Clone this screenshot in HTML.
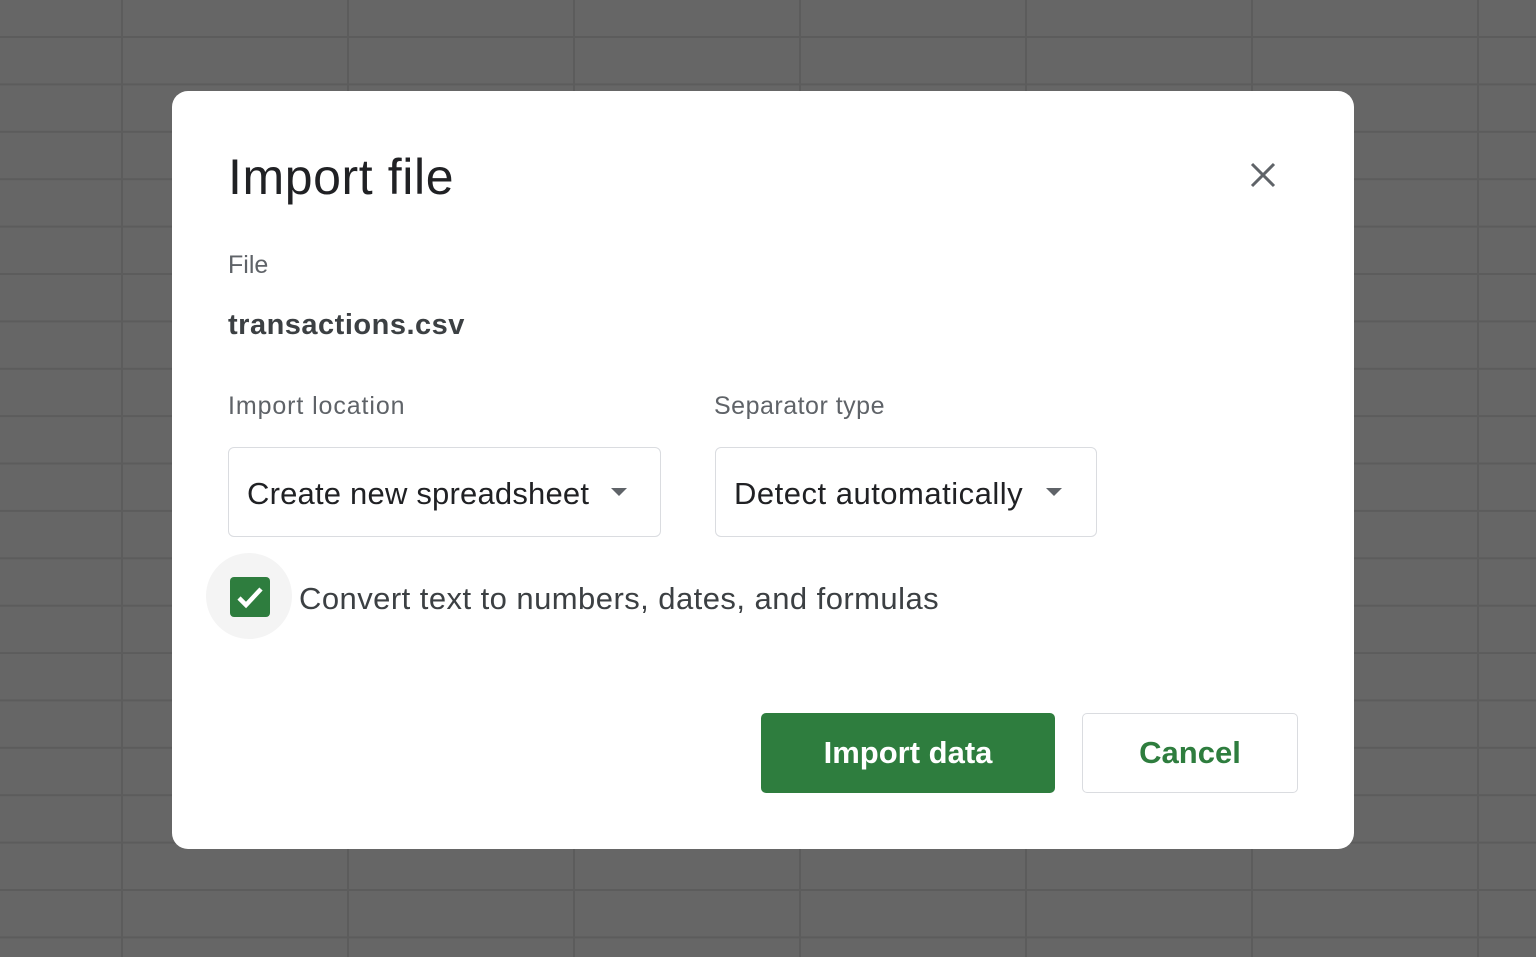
<!DOCTYPE html>
<html><head><style>
html,body{margin:0;padding:0;}
body{width:1536px;height:957px;overflow:hidden;position:relative;background:#666;font-family:"Liberation Sans",Arial,sans-serif;
background-image:linear-gradient(to right,#5c5c5c 0,#5c5c5c 2px,transparent 2px),linear-gradient(to bottom,#5c5c5c 0,#5c5c5c 2px,transparent 2px);
background-size:226px 100%,100% 47.4px;background-position:121px 0,0 36px;}
.dlg{position:absolute;left:172px;top:91px;width:1182px;height:758px;background:#fff;border-radius:16px;}
.t{position:absolute;color:#202124;white-space:nowrap;}
.sel{position:absolute;top:356px;height:90px;border:1.5px solid #dadce0;border-radius:6px;box-sizing:border-box;}
.sel span{position:absolute;left:18px;top:28px;font-size:31px;color:#202124;}
.arr{position:absolute;top:40px;width:0;height:0;border-left:8px solid transparent;border-right:8px solid transparent;border-top:8px solid #5f6368;}
</style></head><body>
<div class="dlg">
<div class="t" style="left:56px;top:57px;font-size:50px;letter-spacing:0.6px;">Import file</div>
<svg style="position:absolute;left:1078px;top:71px" width="26" height="26" viewBox="0 0 26 26"><path d="M2 2L24 24M24 2L2 24" stroke="#5f6368" stroke-width="3"/></svg>
<div class="t" style="left:56px;top:160px;font-size:25px;color:#5f6368;">File</div>
<div class="t" style="left:56px;top:218px;font-size:29px;font-weight:bold;color:#3c4043;letter-spacing:0.5px;">transactions.csv</div>
<div class="t" style="left:56px;top:301px;font-size:25px;color:#5f6368;letter-spacing:0.9px;">Import location</div>
<div class="t" style="left:542px;top:301px;font-size:25px;color:#5f6368;letter-spacing:0.5px;">Separator type</div>
<div class="sel" style="left:56px;width:433px;"><span style="letter-spacing:0.2px">Create new spreadsheet</span><div class="arr" style="left:382px"></div></div>
<div class="sel" style="left:543px;width:382px;"><span style="letter-spacing:0.5px">Detect automatically</span><div class="arr" style="left:330px"></div></div>
<div style="position:absolute;left:34px;top:462px;width:86px;height:86px;border-radius:50%;background:#f4f4f4;"></div>
<div style="position:absolute;left:58px;top:486px;width:40px;height:40px;border-radius:4px;background:#2e7d3e;"></div>
<svg style="position:absolute;left:58px;top:486px" width="40" height="40" viewBox="0 0 40 40"><path d="M9 21L16 28L31 12" stroke="#fff" stroke-width="4.5" fill="none"/></svg>
<div class="t" style="left:127px;top:490px;font-size:31px;color:#3c4043;letter-spacing:0.45px;">Convert text to numbers, dates, and formulas</div>
<div style="position:absolute;left:589px;top:622px;width:294px;height:80px;background:#2e7d3e;border-radius:5px;color:#fff;font-size:31px;font-weight:bold;text-align:center;line-height:80px;">Import data</div>
<div style="position:absolute;left:910px;top:622px;width:216px;height:80px;border:1.5px solid #dadce0;box-sizing:border-box;border-radius:5px;color:#2e7d3e;font-size:31px;font-weight:bold;text-align:center;line-height:77px;">Cancel</div>
</div>
</body></html>
